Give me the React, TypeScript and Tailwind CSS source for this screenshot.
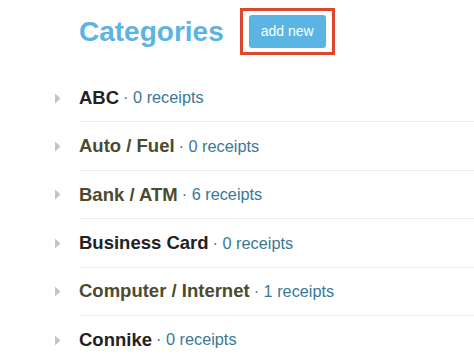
const categories = [
  { name: "ABC", count: 0, visited: false },
  { name: "Auto / Fuel", count: 0, visited: true },
  { name: "Bank / ATM", count: 6, visited: true },
  { name: "Business Card", count: 0, visited: false },
  { name: "Computer / Internet", count: 1, visited: true },
  { name: "Connike", count: 0, visited: false },
];

const App: React.FC = () => {
  return (
    <div
      className="min-h-screen bg-white pl-[54px]"
      style={{ fontFamily: '"Liberation Sans", Arial, Helvetica, sans-serif' }}
    >
      <div className="flex items-center pt-[8px] pl-[25px] mb-[19px]">
        <h1 className="text-[28px] font-bold text-[#5bb4e2] leading-none">
          Categories
        </h1>
        <div className="ml-[16px] border-[3px] border-[#e0452d] px-[6px] py-[4px]">
          <button className="h-[33px] w-[77px] rounded-[3px] bg-[#5ab4e4] text-[14px] text-white">
            add new
          </button>
        </div>
      </div>
      <ul>
        {categories.map((c) => (
          <li key={c.name} className="flex">
            <div className="w-[25px] flex items-center">
              <svg width="7" height="11" viewBox="0 0 7 11">
                <path d="M1 0.5 L6.5 5.5 L1 10.5 Z" fill="#c4c4c4" />
              </svg>
            </div>
            <div className="flex-1 h-[48.4px] flex items-center border-b border-[#ebebeb]">
              <span
                className={`text-[18.5px] font-bold ${
                  c.visited ? "text-[#4b4b2e]" : "text-[#222222]"
                }`}
              >
                {c.name}
              </span>
              <span className="text-[16.3px] text-[#3a7896] ml-[4px]">
                · {c.count} receipts
              </span>
            </div>
          </li>
        ))}
      </ul>
    </div>
  );
};

export default App;
